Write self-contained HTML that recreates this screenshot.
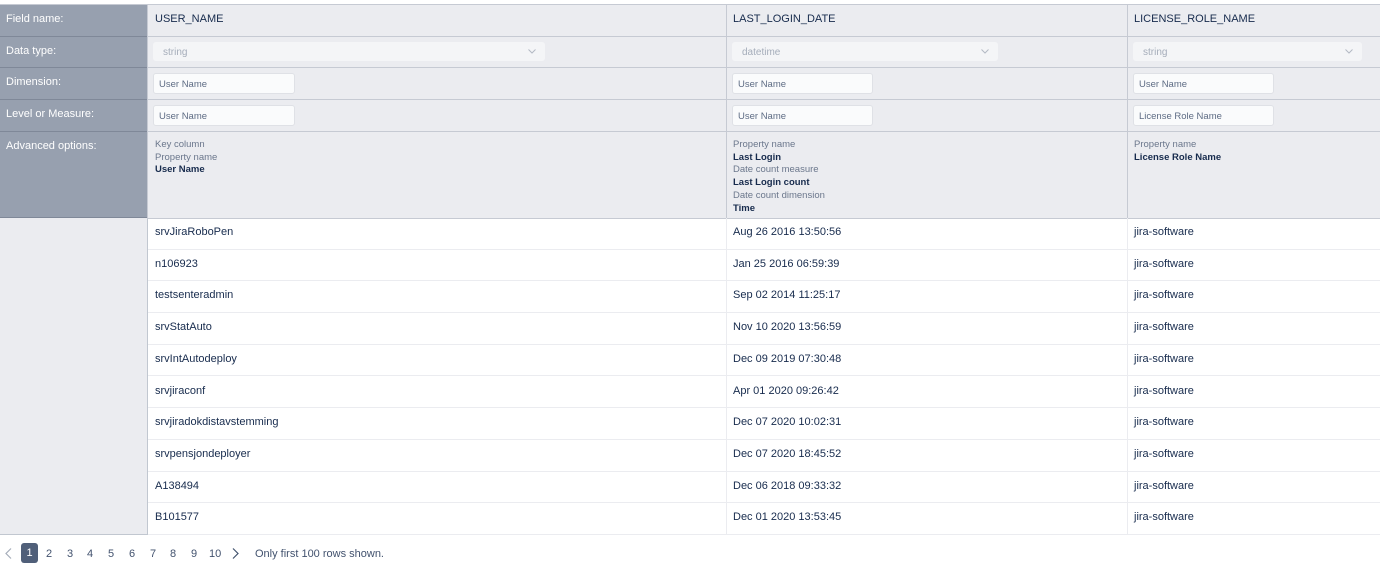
<!DOCTYPE html>
<html><head><style>
*{box-sizing:border-box;margin:0;padding:0}
body{width:1380px;height:574px;background:#fff;font-family:"Liberation Sans",sans-serif;position:relative;overflow:hidden;color:#172b4d}
.a{position:absolute}
.lbl{background:#97a0af;color:#fff;font-size:11px;padding:8px 0 0 6px;border-bottom:1px solid #7f8898}
.hd{background:#ebecf0;border-bottom:1px solid #c6cad3;border-left:1px solid #c6cad3}
.t{font-size:11px;color:#172b4d}
.sel{background:#f4f5f7;border-radius:3px;height:19px;font-size:10px;color:#a5adba;padding:5px 0 0 10px}
.sel svg{position:absolute;right:9px;top:7px}
.in{background:#fafbfc;border:1px solid #dfe1e6;border-radius:3px;height:21px;font-size:9.5px;color:#5e6c84;padding:5px 0 0 5px}
.adv{font-size:9.5px;line-height:12.7px;color:#6b778c}
.adv b{color:#172b4d}
.dr{border-bottom:1px solid #ebecf0}
.pg{font-size:11px;color:#42526e;top:548px}
</style></head><body>
<div class="a" style="left:0;top:4px;width:1380px;height:1px;background:#c6cad3"></div>
<div class="a" style="left:0;top:218px;width:148px;height:317px;background:#ebecf0;border-right:1px solid #c1c7d0;border-bottom:1px solid #c1c7d0"></div>
<div class="a lbl" style="left:0;top:5px;width:148px;height:32px">Field name:</div>
<div class="a lbl" style="left:0;top:37px;width:148px;height:31px">Data type:</div>
<div class="a lbl" style="left:0;top:68px;width:148px;height:32px">Dimension:</div>
<div class="a lbl" style="left:0;top:100px;width:148px;height:32px">Level or Measure:</div>
<div class="a lbl" style="left:0;top:132px;width:148px;height:86px">Advanced options:</div>

<div class="a hd" style="left:147px;top:5px;width:580px;height:32px"></div>
<div class="a hd" style="left:726px;top:5px;width:402px;height:32px"></div>
<div class="a hd" style="left:1127px;top:5px;width:253px;height:32px"></div>
<div class="a hd" style="left:147px;top:37px;width:580px;height:31px"></div>
<div class="a hd" style="left:726px;top:37px;width:402px;height:31px"></div>
<div class="a hd" style="left:1127px;top:37px;width:253px;height:31px"></div>
<div class="a hd" style="left:147px;top:68px;width:580px;height:32px"></div>
<div class="a hd" style="left:726px;top:68px;width:402px;height:32px"></div>
<div class="a hd" style="left:1127px;top:68px;width:253px;height:32px"></div>
<div class="a hd" style="left:147px;top:100px;width:580px;height:32px"></div>
<div class="a hd" style="left:726px;top:100px;width:402px;height:32px"></div>
<div class="a hd" style="left:1127px;top:100px;width:253px;height:32px"></div>
<div class="a hd" style="left:147px;top:132px;width:580px;height:87px"></div>
<div class="a hd" style="left:726px;top:132px;width:402px;height:87px"></div>
<div class="a hd" style="left:1127px;top:132px;width:253px;height:87px"></div>

<div class="a t" style="left:155px;top:13px">USER_NAME</div>
<div class="a t" style="left:733px;top:13px">LAST_LOGIN_DATE</div>
<div class="a t" style="left:1134px;top:13px">LICENSE_ROLE_NAME</div>

<div class="a sel" style="left:153px;top:42px;width:392px">string<svg width="8" height="5" viewBox="0 0 8 5"><path d="M0.5 0.5L4 4L7.5 0.5" fill="none" stroke="#b3b9c4" stroke-width="1"/></svg></div>
<div class="a sel" style="left:732px;top:42px;width:266px">datetime<svg width="8" height="5" viewBox="0 0 8 5"><path d="M0.5 0.5L4 4L7.5 0.5" fill="none" stroke="#b3b9c4" stroke-width="1"/></svg></div>
<div class="a sel" style="left:1133px;top:42px;width:229px">string<svg width="8" height="5" viewBox="0 0 8 5"><path d="M0.5 0.5L4 4L7.5 0.5" fill="none" stroke="#b3b9c4" stroke-width="1"/></svg></div>

<div class="a in" style="left:153px;top:73px;width:142px">User Name</div>
<div class="a in" style="left:732px;top:73px;width:141px">User Name</div>
<div class="a in" style="left:1133px;top:73px;width:141px">User Name</div>
<div class="a in" style="left:153px;top:105px;width:142px">User Name</div>
<div class="a in" style="left:732px;top:105px;width:141px">User Name</div>
<div class="a in" style="left:1133px;top:105px;width:141px">License Role Name</div>

<div class="a adv" style="left:155px;top:139px">Key column<br>Property name<br><b>User Name</b></div>
<div class="a adv" style="left:733px;top:139px">Property name<br><b>Last Login</b><br>Date count measure<br><b>Last Login count</b><br>Date count dimension<br><b>Time</b></div>
<div class="a adv" style="left:1134px;top:139px">Property name<br><b>License Role Name</b></div>

<div class="a" style="left:726px;top:218px;width:1px;height:317px;background:#ebecf0"></div>
<div class="a" style="left:1127px;top:218px;width:1px;height:317px;background:#ebecf0"></div>

<div id="rows"></div>
<script>
var d=[["srvJiraRoboPen","Aug 26 2016 13:50:56"],["n106923","Jan 25 2016 06:59:39"],["testsenteradmin","Sep 02 2014 11:25:17"],["srvStatAuto","Nov 10 2020 13:56:59"],["srvIntAutodeploy","Dec 09 2019 07:30:48"],["srvjiraconf","Apr 01 2020 09:26:42"],["srvjiradokdistavstemming","Dec 07 2020 10:02:31"],["srvpensjondeployer","Dec 07 2020 18:45:52"],["A138494","Dec 06 2018 09:33:32"],["B101577","Dec 01 2020 13:53:45"]];
var h="";
d.forEach(function(r,i){var y=218+i*31.7;
h+='<div class="a dr" style="left:148px;top:'+y.toFixed(1)+'px;width:1232px;height:31.7px"></div>';
var ty=(y+8).toFixed(1);
h+='<div class="a t" style="left:155px;top:'+ty+'px">'+r[0]+'</div>';
h+='<div class="a t" style="left:733px;top:'+ty+'px">'+r[1]+'</div>';
h+='<div class="a t" style="left:1134px;top:'+ty+'px">jira-software</div>';});
document.getElementById("rows").innerHTML=h;
</script>

<svg class="a" style="left:5px;top:548px" width="7" height="11" viewBox="0 0 7 11"><path d="M6 0.5L1 5.5L6 10.5" fill="none" stroke="#a5adba" stroke-width="1.2"/></svg>
<div class="a" style="left:21px;top:543px;width:17px;height:20px;background:#505f79;border-radius:3px;color:#fff;font-size:11px;text-align:center;padding-top:4px">1</div>
<div class="a pg" style="left:46px">2</div>
<div class="a pg" style="left:67px">3</div>
<div class="a pg" style="left:87px">4</div>
<div class="a pg" style="left:108px">5</div>
<div class="a pg" style="left:129px">6</div>
<div class="a pg" style="left:150px">7</div>
<div class="a pg" style="left:170px">8</div>
<div class="a pg" style="left:191px">9</div>
<div class="a pg" style="left:209px">10</div>
<svg class="a" style="left:232px;top:548px" width="7" height="11" viewBox="0 0 7 11"><path d="M1 0.5L6 5.5L1 10.5" fill="none" stroke="#42526e" stroke-width="1.2"/></svg>
<div class="a pg" style="left:255px">Only first 100 rows shown.</div>
</body></html>
